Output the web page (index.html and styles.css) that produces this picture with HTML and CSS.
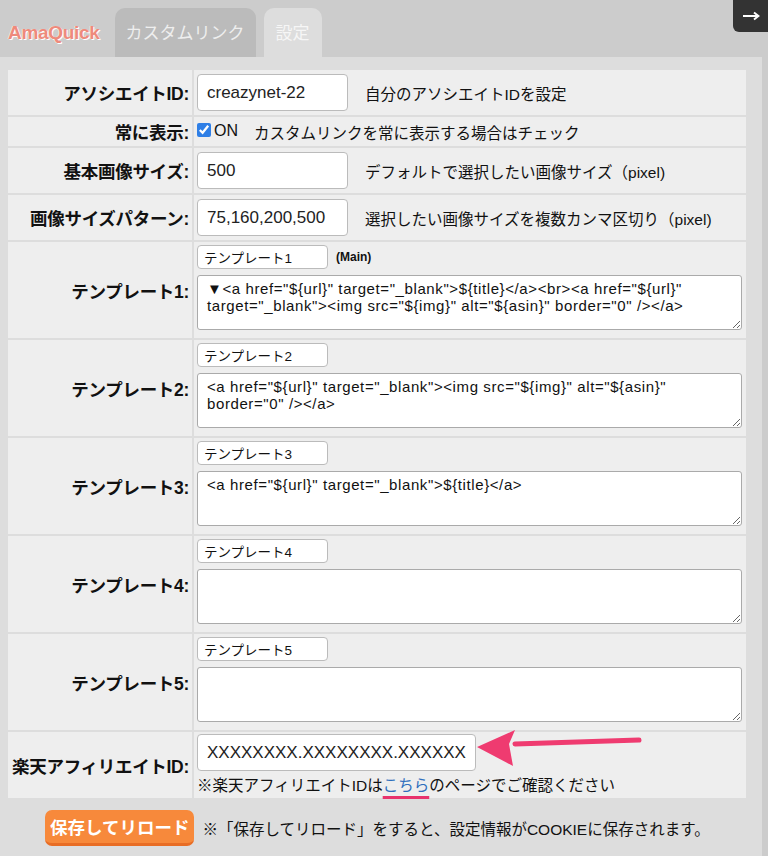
FILE: index.html
```html
<!DOCTYPE html>
<html lang="ja">
<head>
    <meta charset="UTF-8">
    <title>AmaQuick 設定</title>
    <link rel="stylesheet" href="styles.css">
</head>
<body>
    <div class="header">
        <span class="logo">AmaQuick</span>
        <a class="tab" href="#">カスタムリンク</a>
        <a class="tab active" href="#">設定</a>
        <a class="close-btn" href="#">
            <svg width="18" height="10" viewBox="0 0 18 10"><path d="M1 5 H16 M12 1.5 L16.5 5 L12 8.5" stroke="#fff" stroke-width="2" fill="none"/></svg>
        </a>
    </div>
    <div class="panel">
        <table class="settings">
            <tr>
                <th>アソシエイトID:</th>
                <td><input type="text" class="field" value="creazynet-22"><span class="note">自分のアソシエイトIDを設定</span></td>
            </tr>
            <tr>
                <th>常に表示:</th>
                <td class="check-cell"><label class="check"><input type="checkbox" checked>ON</label><span class="note">カスタムリンクを常に表示する場合はチェック</span></td>
            </tr>
            <tr>
                <th>基本画像サイズ:</th>
                <td><input type="text" class="field" value="500"><span class="note">デフォルトで選択したい画像サイズ（pixel)</span></td>
            </tr>
            <tr>
                <th>画像サイズパターン:</th>
                <td><input type="text" class="field" value="75,160,200,500"><span class="note">選択したい画像サイズを複数カンマ区切り（pixel)</span></td>
            </tr>
            <tr>
                <th>テンプレート1:</th>
                <td class="tpl">
                    <div class="tpl-head"><input type="text" class="tpl-name" value="テンプレート1"><span class="main">(Main)</span></div>
                    <textarea class="tpl-body">▼&lt;a href="${url}" target="_blank"&gt;${title}&lt;/a&gt;&lt;br&gt;&lt;a href="${url}" target="_blank"&gt;&lt;img src="${img}" alt="${asin}" border="0" /&gt;&lt;/a&gt;</textarea>
                </td>
            </tr>
            <tr>
                <th>テンプレート2:</th>
                <td class="tpl">
                    <div class="tpl-head"><input type="text" class="tpl-name" value="テンプレート2"></div>
                    <textarea class="tpl-body">&lt;a href="${url}" target="_blank"&gt;&lt;img src="${img}" alt="${asin}" border="0" /&gt;&lt;/a&gt;</textarea>
                </td>
            </tr>
            <tr>
                <th>テンプレート3:</th>
                <td class="tpl">
                    <div class="tpl-head"><input type="text" class="tpl-name" value="テンプレート3"></div>
                    <textarea class="tpl-body">&lt;a href="${url}" target="_blank"&gt;${title}&lt;/a&gt;</textarea>
                </td>
            </tr>
            <tr>
                <th>テンプレート4:</th>
                <td class="tpl">
                    <div class="tpl-head"><input type="text" class="tpl-name" value="テンプレート4"></div>
                    <textarea class="tpl-body"></textarea>
                </td>
            </tr>
            <tr>
                <th>テンプレート5:</th>
                <td class="tpl">
                    <div class="tpl-head"><input type="text" class="tpl-name" value="テンプレート5"></div>
                    <textarea class="tpl-body"></textarea>
                </td>
            </tr>
            <tr>
                <th>楽天アフィリエイトID:</th>
                <td class="rakuten">
                    <input type="text" class="field wide" value="XXXXXXXX.XXXXXXXX.XXXXXXXX">
                    <p class="hint">※楽天アフィリエイトIDは<a href="#" class="here">こちら</a>のページでご確認ください</p>
                    <svg class="pointer" width="170" height="46" viewBox="0 0 170 46">
                        <path d="M40 14 L164 10" stroke="#ef3b70" stroke-width="5" stroke-linecap="round" fill="none"/>
                        <path d="M2 17 L40 0 L34 14 L38 36 Z" fill="#ef3b70"/>
                    </svg>
                </td>
            </tr>
        </table>
        <div class="actions">
            <button class="save-btn">保存してリロード</button>
            <span class="note">※「保存してリロード」をすると、設定情報がCOOKIEに保存されます。</span>
        </div>
    </div>
</body>
</html>
```

FILE: styles.css
```css
body {
    margin: 0;
    font-family: 'Liberation Sans', 'Noto Sans CJK JP', sans-serif;
    background-color: #cccccc;
    color: #111;
    width: 768px;
    height: 856px;
    overflow: hidden;
}
.header {
    position: relative;
    height: 57px;
    display: flex;
    align-items: flex-end;
    padding-left: 8px;
}
.logo {
    font-size: 19px;
    font-weight: bold;
    color: #ee8a7c;
    text-shadow: 1px 1px 0 #fff, -1px 0 0 #fbe4df;
    margin-bottom: 13px;
    margin-right: 15px;
    letter-spacing: -0.3px;
}
.tab {
    height: 49px;
    box-sizing: border-box;
    padding: 11px 11px 0;
    font-size: 17px;
    color: #eeeeee;
    text-decoration: none;
    background-color: #bbbbbb;
    border-radius: 10px 10px 0 0;
    margin-right: 8px;
}
.tab.active {
    background-color: #dddddd;
    color: #f6f6f6;
    padding: 11px 12px 0;
}
.close-btn {
    position: absolute;
    top: 0;
    right: 0;
    width: 35px;
    height: 32px;
    background-color: #333;
    border-bottom-left-radius: 6px;
    display: flex;
    align-items: center;
    justify-content: center;
}
.panel {
    background-color: #dddddd;
    height: 799px;
    padding: 11px 0 0 6px;
    box-sizing: border-box;
    width: 762px;
}
.settings {
    border-collapse: separate;
    border-spacing: 2px;
    width: 742px;
    table-layout: fixed;
}
.settings th,
.settings td {
    background-color: #eeeeee;
    padding: 2px 4px 2px 3px;
    vertical-align: middle;
}
.settings th {
    width: 184px;
    box-sizing: border-box;
    text-align: right;
    font-size: 17.5px;
    font-weight: bold;
    padding: 2px 3px 2px 0;
    white-space: nowrap;
    letter-spacing: -0.3px;
}
.settings td {
    font-size: 15.5px;
    height: 41px;
}
.field {
    width: 151px;
    height: 37px;
    box-sizing: border-box;
    border: 1px solid #bbbbbb;
    border-radius: 4px;
    font-family: inherit;
    font-size: 17px;
    padding: 0 9px;
    vertical-align: middle;
    margin: 0;
    color: #222;
}
.field.wide {
    width: 279px;
    display: block;
}
.note {
    margin-left: 17px;
    vertical-align: middle;
}
.settings td.check-cell {
    height: 26px;
    padding: 0 2px;
}
.check {
    font-size: 16px;
}
.check input {
    width: 14px;
    height: 14px;
    margin: 0 3px 0 1px;
    vertical-align: -1px;
    accent-color: #2f7fe6;
}
.check-cell .note {
    margin-left: 16px;
}
.settings td.tpl {
    height: 93px;
    vertical-align: top;
    padding: 3px 4px 0 3px;
}
.tpl-head {
    display: flex;
    align-items: center;
    margin-bottom: 6px;
}
.tpl-name {
    width: 131px;
    height: 24px;
    box-sizing: border-box;
    border: 1px solid #bbbbbb;
    border-radius: 4px;
    font-family: inherit;
    font-size: 13.5px;
    padding: 0 6px;
    margin: 0;
    color: #111;
}
.main {
    font-size: 12px;
    font-weight: bold;
    margin-left: 8px;
}
.tpl-body {
    display: block;
    width: 545px;
    height: 55px;
    box-sizing: border-box;
    border: 1px solid #aaaaaa;
    border-radius: 3px;
    font-family: 'Liberation Sans', 'Noto Sans CJK JP', sans-serif;
    font-size: 15px;
    letter-spacing: 0.6px;
    line-height: 17px;
    padding: 4px 9px;
    margin: 0;
    resize: vertical;
    color: #111;
}
.settings td.rakuten {
    position: relative;
    height: 64px;
    padding: 2px 4px 0 3px;
    vertical-align: top;
}
.hint {
    margin: 2px 0 0;
}
.here {
    color: #2f6fbd;
    text-decoration: underline;
    text-decoration-color: #e8336d;
    text-decoration-thickness: 3px;
    text-underline-offset: 5px;
}
.pointer {
    position: absolute;
    left: 281px;
    top: -2px;
}
.actions {
    display: flex;
    align-items: center;
    padding: 10px 0 0 39px;
}
.save-btn {
    background-color: #f7893b;
    color: #fff;
    border: none;
    border-bottom: 3px solid #e86d25;
    border-radius: 7px;
    font-family: inherit;
    font-size: 17.5px;
    font-weight: bold;
    height: 36px;
    padding: 0 5px;
    cursor: pointer;
}
.actions .note {
    margin-left: 8px;
    font-size: 15.5px;
}
```
